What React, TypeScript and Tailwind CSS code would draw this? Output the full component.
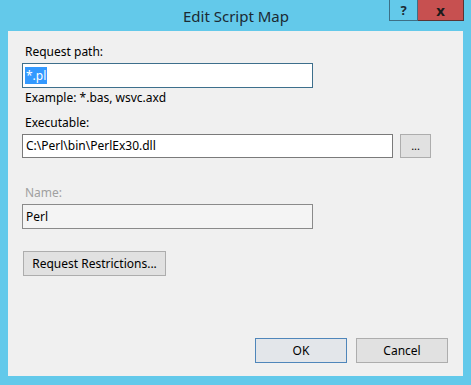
import React from "react";

const font = { fontFamily: '"Noto Sans", "Open Sans", Arial, sans-serif' };

export default function App() {
  return (
    <div
      className="w-[471px] h-[385px] bg-[#63c9ea] flex flex-col text-[12px] text-black overflow-hidden"
      style={font}
    >
      {/* Title bar */}
      <div className="relative h-[31px] shrink-0 flex items-start justify-center">
        <div className="pt-[6px] text-[15px] leading-[20px] text-[#1b2a33] pl-[1px]">
          Edit Script Map
        </div>
        <div className="absolute top-0 right-[7px] flex h-[21px]">
          <div className="w-[29px] h-[21px] border border-[#3d6f86] border-t-0 flex items-center justify-center text-[13px] leading-[18px] font-bold text-[#1b2a33]">
            ?
          </div>
          <div className="w-[46px] h-[21px] bg-[#c75050] border border-[#5a3434] border-t-0 border-l-0 flex items-center justify-center text-[15px] font-bold text-[#1b1b1b] leading-[18px]">
            x
          </div>
        </div>
      </div>

      {/* Content */}
      <div className="mx-[8px] mb-[9px] flex-1 bg-[#f0f0f0] flex flex-col pl-[14px] pr-[32px]">
        <div className="mt-[13px] leading-[16px] pl-[3px]">Request path:</div>
        <div className="mt-[3px] w-[291px] h-[25px] bg-white border border-[#3d6f8c] flex items-center px-[2px]">
          <span className="bg-[#3399ff] text-white leading-[17px] px-[1px]">*.pl</span>
        </div>
        <div className="mt-[2px] leading-[16px] pl-[3px]">Example: *.bas, wsvc.axd</div>
        <div className="mt-[9px] leading-[16px] pl-[3px]">Executable:</div>
        <div className="mt-[3px] flex items-start gap-[7px]">
          <div className="w-[373px] h-[24px] bg-white border border-[#7a7a7a] flex items-center px-[3px]">
            C:\Perl\bin\PerlEx30.dll
          </div>
          <div className="w-[31px] h-[24px] bg-[#e1e1e1] border border-[#adadad] flex items-center justify-center text-[11px] leading-none pb-[2px]">
            ...
          </div>
        </div>
        <div className="mt-[27px] leading-[16px] pl-[3px] text-[#a0a0a0]">Name:</div>
        <div className="mt-[3px] w-[291px] h-[25px] bg-[#f4f4f4] border border-[#8a8a8a] flex items-center px-[3px]">
          Perl
        </div>
        <div className="mt-[22px] pl-[1px]">
          <div className="w-[143px] h-[25px] bg-[#e1e1e1] border border-[#adadad] flex items-center justify-center">
            Request Restrictions...
          </div>
        </div>
        <div className="flex-1" />
        <div className="flex justify-end gap-[9px] mb-[13px] mr-[-17px]">
          <div className="w-[92px] h-[25px] bg-[#e3e6ea] border border-[#4f86ba] flex items-center justify-center">
            OK
          </div>
          <div className="w-[92px] h-[25px] bg-[#e1e1e1] border border-[#adadad] flex items-center justify-center">
            Cancel
          </div>
        </div>
      </div>
    </div>
  );
}
